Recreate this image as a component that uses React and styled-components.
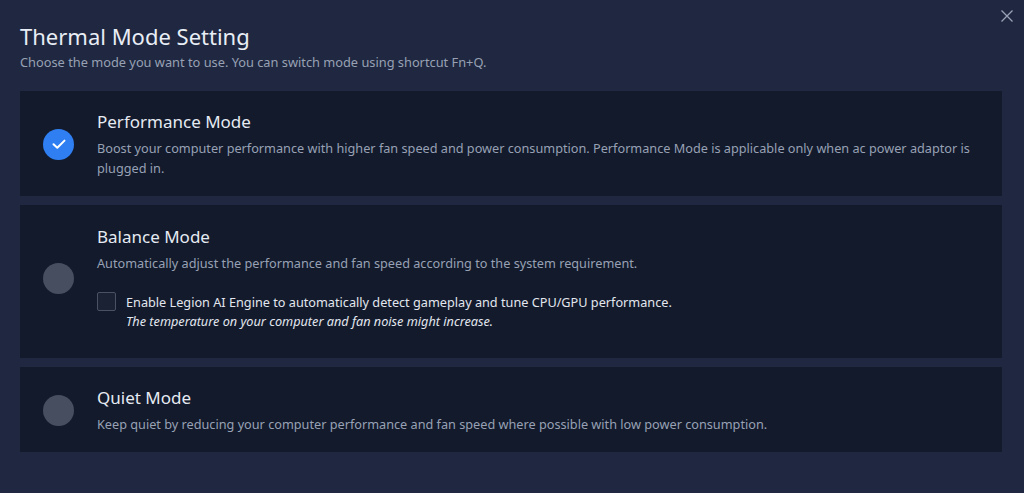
import React, { useState } from 'react';
import styled, { createGlobalStyle } from 'styled-components';

const GlobalStyle = createGlobalStyle`
  html, body {
    margin: 0;
    padding: 0;
    background: #1f2840;
  }
  body {
    font-family: 'Noto Sans', 'Open Sans', sans-serif;
  }
  * { box-sizing: border-box; }
`;

const MODES = [
  {
    id: 'performance',
    name: 'Performance Mode',
    desc: 'Boost your computer performance with higher fan speed and power consumption. Performance Mode is applicable only when ac power adaptor is plugged in.',
  },
  {
    id: 'balance',
    name: 'Balance Mode',
    desc: 'Automatically adjust the performance and fan speed according to the system requirement.',
    option: {
      label: 'Enable Legion AI Engine to automatically detect gameplay and tune CPU/GPU performance.',
      note: 'The temperature on your computer and fan noise might increase.',
    },
  },
  {
    id: 'quiet',
    name: 'Quiet Mode',
    desc: 'Keep quiet by reducing your computer performance and fan speed where possible with low power consumption.',
  },
];

function App() {
  const [mode, setMode] = useState('performance');
  const [aiEngine, setAiEngine] = useState(false);

  return (
    <>
      <GlobalStyle />
      <Dialog>
        <CloseButton aria-label="close">
          <svg width="12" height="12" viewBox="0 0 12 12">
            <path d="M0.5 0.5 L11.5 11.5 M11.5 0.5 L0.5 11.5" stroke="#9aa2b6" strokeWidth="1.3" fill="none" />
          </svg>
        </CloseButton>
        <Header>
          <Title>Thermal Mode Setting</Title>
          <Subtitle>Choose the mode you want to use. You can switch mode using shortcut Fn+Q.</Subtitle>
        </Header>
        <ModeList>
          {MODES.map(m => (
            <ModeCard key={m.id} extra={!!m.option} onClick={() => setMode(m.id)}>
              <Radio selected={mode === m.id}>
                {mode === m.id && (
                  <svg width="16" height="16" viewBox="0 0 16 16">
                    <path d="M2.5 8.2 L6.3 11.8 L13.5 4.6" stroke="#fff" strokeWidth="2" fill="none" strokeLinecap="round" strokeLinejoin="round" />
                  </svg>
                )}
              </Radio>
              <ModeBody>
                <ModeName>{m.name}</ModeName>
                <ModeDesc>{m.desc}</ModeDesc>
                {m.option && (
                  <OptionRow
                    onClick={e => {
                      e.stopPropagation();
                      setAiEngine(v => !v);
                    }}
                  >
                    <CheckBox checked={aiEngine} />
                    <OptionText>
                      <OptionLabel>{m.option.label}</OptionLabel>
                      <OptionNote>{m.option.note}</OptionNote>
                    </OptionText>
                  </OptionRow>
                )}
              </ModeBody>
            </ModeCard>
          ))}
        </ModeList>
      </Dialog>
    </>
  );
}

export default App;

const Dialog = styled.div`
  position: relative;
  width: 1024px;
  height: 493px;
  background: #1f2840;
  padding: 22px 22px 0 20px;
`;
const CloseButton = styled.button`
  position: absolute;
  top: 10px;
  right: 11px;
  width: 12px;
  height: 12px;
  padding: 0;
  border: none;
  background: none;
  display: flex;
  cursor: pointer;
`;
const Header = styled.div`
  display: flex;
  flex-direction: column;
  margin-bottom: 19px;
`;
const Title = styled.h1`
  margin: 0;
  font-size: 22px;
  font-weight: 400;
  line-height: 28px;
  color: #e9edf5;
`;
const Subtitle = styled.p`
  margin: 2px 0 0;
  font-size: 12.8px;
  line-height: 20px;
  color: #98a1b4;
`;
const ModeList = styled.div`
  display: flex;
  flex-direction: column;
  gap: 9px;
`;
const ModeCard = styled.div`
  display: flex;
  align-items: center;
  gap: 23px;
  background: #121a2c;
  padding: ${props => (props.extra ? '20px 23px 27px' : '19px 23px 18px')};
  cursor: pointer;
`;
const Radio = styled.div`
  flex: none;
  width: 31px;
  height: 31px;
  border-radius: 50%;
  background: ${props => (props.selected ? '#2f7ff2' : '#474e60')};
  display: flex;
  align-items: center;
  justify-content: center;
`;
const ModeBody = styled.div`
  flex: 1;
  display: flex;
  flex-direction: column;
`;
const ModeName = styled.div`
  font-size: 17px;
  line-height: 24px;
  color: #e6eaf2;
  margin-bottom: 4px;
`;
const ModeDesc = styled.div`
  font-size: 12.7px;
  line-height: 20px;
  color: #98a1b4;
`;
const OptionRow = styled.div`
  display: flex;
  align-items: flex-start;
  gap: 10px;
  margin-top: 19px;
`;
const CheckBox = styled.div`
  flex: none;
  width: 19px;
  height: 19px;
  margin-top: 0;
  border: 1px solid #4a5163;
  border-radius: 2px;
  background: ${props => (props.checked ? '#2f7ff2' : '#1b2234')};
`;
const OptionText = styled.div`
  display: flex;
  flex-direction: column;
`;
const OptionLabel = styled.div`
  font-size: 12.7px;
  line-height: 20px;
  color: #e2e6ee;
`;
const OptionNote = styled.div`
  font-size: 12.7px;
  line-height: 19px;
  font-style: italic;
  color: #e2e6ee;
`;
